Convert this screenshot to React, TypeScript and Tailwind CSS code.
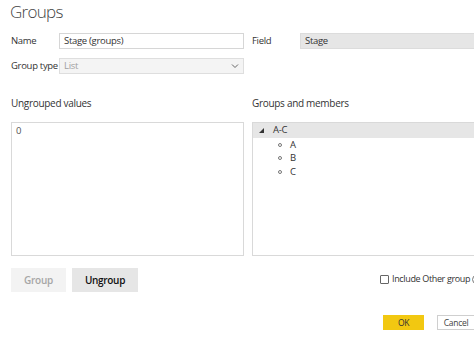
import React from "react";

const font = { fontFamily: '"Open Sans", "Noto Sans", sans-serif' };

export default function App() {
  return (
    <div className="w-[474px] h-[347px] overflow-hidden bg-white text-[#333] tracking-[-0.3px]" style={font}>
      <div className="w-[720px]">
        {/* Title */}
        <h1 className="pl-[10px] pt-[1px] h-[24px] text-[17px] leading-[22px] font-light text-[#444] tracking-[-0.7px]">Groups</h1>

        {/* Top form */}
        <div className="mt-[9px] grid grid-cols-[233px_1fr] gap-x-[8px] pl-[11px]">
          <div className="flex flex-col gap-[9px]">
            <div className="flex items-center h-[16px]">
              <span className="w-[48px] text-[9.5px] whitespace-nowrap">Name</span>
              <div className="flex-1 h-[16px] border border-[#d6d6d6] flex items-center px-[4px] text-[9.5px]">Stage (groups)</div>
            </div>
            <div className="flex items-center h-[16px]">
              <span className="w-[48px] text-[9.5px] whitespace-nowrap">Group type</span>
              <div className="flex-1 h-[16px] border border-[#dedede] bg-[#f4f4f4] flex items-center justify-between px-[4px] text-[9.5px] text-[#a0a0a0]">
                <span>List</span>
                <svg width="8" height="6" viewBox="0 0 8 6"><path d="M1 1.5 L4 4.5 L7 1.5" fill="none" stroke="#666" strokeWidth="1" /></svg>
              </div>
            </div>
          </div>
          <div className="flex items-start">
            <div className="flex items-center h-[16px]">
              <span className="w-[48px] text-[9.5px]">Field</span>
              <div className="w-[300px] h-[16px] bg-[#e6e6e6] border border-[#dcdcdc] flex items-center px-[4px] text-[9.5px]">Stage</div>
            </div>
          </div>
        </div>

        {/* Lists */}
        <div className="mt-[22px] grid grid-cols-[233px_300px] gap-x-[8px] pl-[11px]">
          <div>
            <div className="h-[26px] text-[10px] leading-[14px]">Ungrouped values</div>
            <div className="h-[134px] border border-[#d9d9d9] px-[4px] pt-[1px] text-[9.5px] text-[#555]">0</div>
          </div>
          <div>
            <div className="h-[26px] text-[10px] leading-[14px]">Groups and members</div>
            <div className="h-[134px] border border-[#d9d9d9] text-[9.5px]">
              <div className="h-[15px] bg-[#e6e6e6] flex items-center pl-[6px]">
                <svg width="5" height="5" viewBox="0 0 5 5"><path d="M5 0 L5 5 L0 5 Z" fill="#333" /></svg>
                <span className="ml-[9px]">A-C</span>
              </div>
              {["A", "B", "C"].map((l) => (
                <div key={l} className="h-[13.5px] flex items-center pl-[25px]">
                  <span className="w-[4px] h-[4px] shrink-0 rounded-full border border-[#777]"></span>
                  <span className="ml-[8px]">{l}</span>
                </div>
              ))}
            </div>
          </div>
        </div>

        {/* Group / Ungroup */}
        <div className="mt-[12px] pl-[11px] flex gap-[6px] h-[24px]">
          <button className="w-[55px] h-[24px] bg-[#f3f3f3] text-[#a6a6a6] text-[10px] font-semibold">Group</button>
          <button className="w-[66px] h-[24px] bg-[#e6e6e6] text-[#111] text-[10px] font-semibold">Ungroup</button>
        </div>

        {/* Include Other group */}
        <div className="w-[474px] flex justify-end -mt-[20px] h-[14px]">
          <div className="flex items-center w-[94px] text-[9px] tracking-[-0.35px]">
            <span className="w-[9px] h-[9px] shrink-0 border border-[#666] rounded-[1px] bg-white"></span>
            <span className="ml-[3px] whitespace-nowrap">Include Other group</span>
            <span className="ml-[2px] w-[9px] h-[9px] shrink-0 rounded-full border border-[#777]"></span>
          </div>
        </div>

        {/* OK / Cancel */}
        <div className="mt-[29px] pl-[383px] flex gap-[13px]">
          <button className="w-[41px] h-[15px] bg-[#f2c811] text-[8.5px] text-[#333] leading-[15px]">OK</button>
          <button className="w-[38px] h-[15px] bg-white border border-[#cfcfcf] text-[8.5px] text-[#444] leading-[13px]">Cancel</button>
        </div>
      </div>
    </div>
  );
}
